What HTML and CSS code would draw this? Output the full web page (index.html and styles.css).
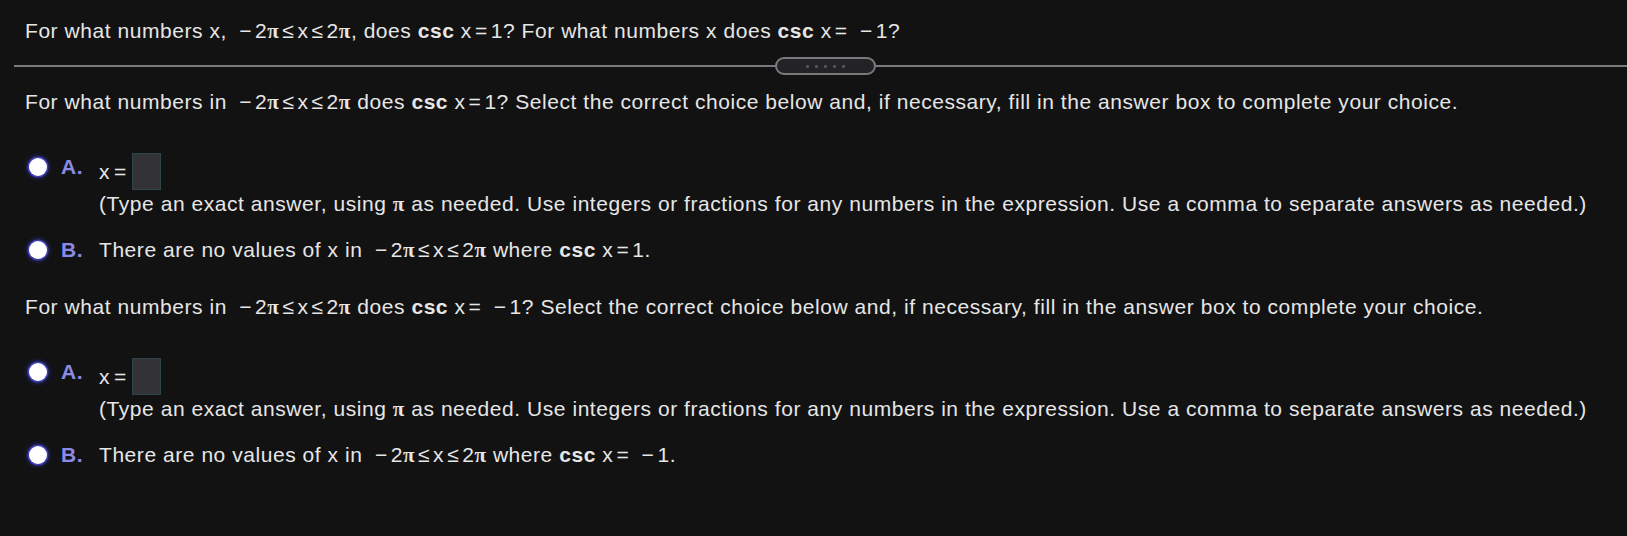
FILE: index.html
```html
<!DOCTYPE html>
<html>
<head>
<meta charset="utf-8">
<link rel="stylesheet" href="styles.css">
</head>
<body>
<div class="page">
  <div class="header">For what numbers x, <span class="m"><span class="op">−</span>2<span class="pi">π</span><span class="op">≤</span>x<span class="op">≤</span>2<span class="pi">π</span></span>, does <b>csc</b> x<span class="op">=</span>1? For what numbers x does <b>csc</b> x<span class="op">=</span> <span class="op">−</span>1?</div>
  <div class="divider"><div class="pill"><span></span><span></span><span></span><span></span><span></span></div></div>

  <div class="question">For what numbers in <span class="m"><span class="op">−</span>2<span class="pi">π</span><span class="op">≤</span>x<span class="op">≤</span>2<span class="pi">π</span></span> does <b>csc</b> x<span class="op">=</span>1? Select the correct choice below and, if necessary, fill in the answer box to complete your choice.</div>
  <div class="choices">
    <div class="choice">
      <span class="radio"></span><span class="lbl">A.</span>
      <div class="body">
        <div class="eq">x<span class="op">=</span><span class="box"></span></div>
        <div class="hint">(Type an exact answer, using <span class="pi">π</span> as needed. Use integers or fractions for any numbers in the expression. Use a comma to separate answers as needed.)</div>
      </div>
    </div>
    <div class="choice b">
      <span class="radio"></span><span class="lbl">B.</span>
      <div class="body">There are no values of x in <span class="m"><span class="op">−</span>2<span class="pi">π</span><span class="op">≤</span>x<span class="op">≤</span>2<span class="pi">π</span></span> where <b>csc</b> x<span class="op">=</span>1.</div>
    </div>
  </div>

  <div class="question q2">For what numbers in <span class="m"><span class="op">−</span>2<span class="pi">π</span><span class="op">≤</span>x<span class="op">≤</span>2<span class="pi">π</span></span> does <b>csc</b> x<span class="op">=</span> <span class="op">−</span>1? Select the correct choice below and, if necessary, fill in the answer box to complete your choice.</div>
  <div class="choices">
    <div class="choice">
      <span class="radio"></span><span class="lbl">A.</span>
      <div class="body">
        <div class="eq">x<span class="op">=</span><span class="box"></span></div>
        <div class="hint">(Type an exact answer, using <span class="pi">π</span> as needed. Use integers or fractions for any numbers in the expression. Use a comma to separate answers as needed.)</div>
      </div>
    </div>
    <div class="choice b">
      <span class="radio"></span><span class="lbl">B.</span>
      <div class="body">There are no values of x in <span class="m"><span class="op">−</span>2<span class="pi">π</span><span class="op">≤</span>x<span class="op">≤</span>2<span class="pi">π</span></span> where <b>csc</b> x<span class="op">=</span> <span class="op">−</span>1.</div>
    </div>
  </div>
</div>
</body>
</html>
```

FILE: styles.css
```css
html, body {
  margin: 0;
  padding: 0;
  background: #121212;
}
body {
  font-family: "Liberation Sans", Arial, sans-serif;
  font-size: 21px;
  letter-spacing: 0.55px;
  color: #e6e6e6;
  line-height: 26px;
}
.page {
  padding-top: 18px;
}
.header {
  padding-left: 25px;
}
.divider {
  margin: 21px 0 0 14px;
  height: 2px;
  background: #7a7a7e;
  position: relative;
}
.pill {
  position: absolute;
  left: 761px;
  top: -8px;
  width: 97px;
  height: 14px;
  border: 2px solid #7a7a7e;
  border-radius: 9px;
  background: #232325;
  display: flex;
  justify-content: center;
  align-items: center;
  gap: 6px;
}
.pill span {
  width: 3px;
  height: 3px;
  background: #555;
  border-radius: 1px;
}
.question {
  padding-left: 25px;
  margin-top: 22px;
}
.q2 {
  margin-top: 31px;
}
.choices {
  padding-left: 29px;
  margin-top: 39px;
}
.choice {
  display: flex;
  align-items: flex-start;
}
.choice.b {
  margin-top: 20px;
}
.radio {
  width: 18px;
  height: 18px;
  border-radius: 50%;
  background: #fff;
  box-shadow: 0 0 0 1.5px #4040b0, 0 0 4px 2px #2a2a80;
  margin-top: 4px;
  flex: none;
}
.lbl {
  color: #8b8be6;
  font-weight: bold;
  margin-left: 14px;
  width: 38px;
  flex: none;
}
.eq {
  display: flex;
  align-items: center;
  height: 37px;
  margin-top: -1px;
}
.eq .op {
  margin: 0 5px 0 4px;
}
.box {
  display: inline-block;
  width: 27px;
  height: 35px;
  background: #333335;
  border: 1px solid #2c4648;
}
.hint {
  margin-top: 1px;
}
.op {
  margin: 0 3px;
}
.m .op:first-child {
  margin-left: 6px;
}
.pi {
  font-family: "Liberation Serif", "Times New Roman", serif;
  font-weight: bold;
}
b {
  font-weight: bold;
}
```
